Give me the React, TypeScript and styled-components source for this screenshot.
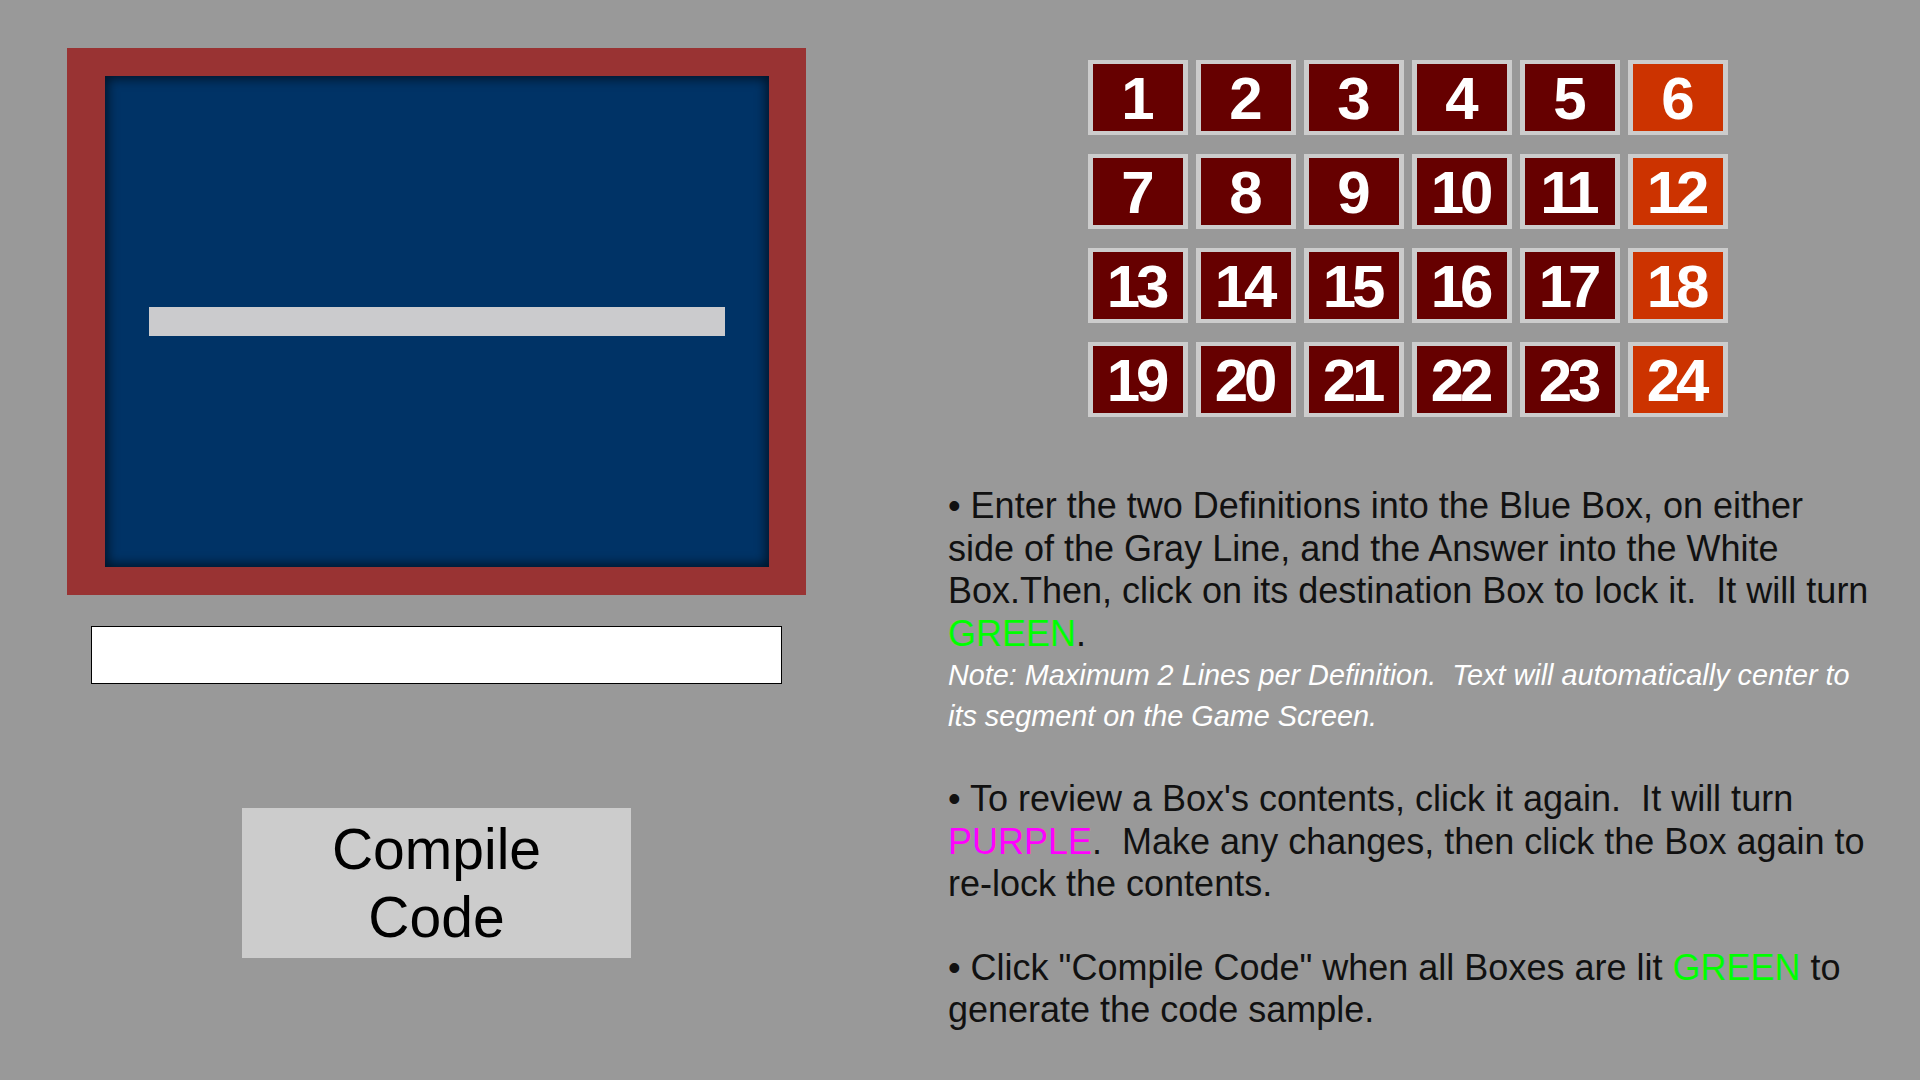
import React from "react";
import styled, { createGlobalStyle } from "styled-components";

const Global = createGlobalStyle`
  html, body {
    margin: 0;
    padding: 0;
    background: #999999;
  }
  body {
    font-family: "Liberation Sans", Arial, sans-serif;
  }
  * { box-sizing: border-box; }
`;

const Page = styled.div`
  width: 1920px;
  height: 1080px;
  background: #999999;
  display: flex;
  align-items: flex-start;
  padding: 48px 0 0 67px;
  gap: 142px;
  overflow: hidden;
`;

const LeftColumn = styled.div`
  width: 739px;
  display: flex;
  flex-direction: column;
  align-items: center;
`;

const Frame = styled.div`
  width: 739px;
  height: 547px;
  background: #993333;
  padding: 28px 37px 28px 38px;
  display: flex;
`;

const Screen = styled.div`
  flex: 1;
  background: #003366;
  box-shadow: inset 0 0 11px 3px rgba(0, 0, 0, 0.6);
  display: flex;
  align-items: center;
  justify-content: center;
`;

const Divider = styled.div`
  width: 576px;
  height: 29px;
  background: #cbcbcd;
`;

const AnswerInput = styled.input`
  margin-top: 31px;
  width: 691px;
  height: 58px;
  background: #ffffff;
  border: 1px solid #000000;
  outline: none;
  padding: 0 8px;
  font-family: "Liberation Sans", Arial, sans-serif;
  font-size: 28px;
`;

const CompileButton = styled.button`
  margin-top: 124px;
  width: 389px;
  height: 150px;
  background: #cccccc;
  border: none;
  padding: 0;
  font-family: "Liberation Sans", Arial, sans-serif;
  font-size: 57px;
  line-height: 68px;
  color: #000000;
  cursor: pointer;
`;

const RightColumn = styled.div`
  padding-top: 12px;
  display: flex;
  flex-direction: column;
`;

const BoxGrid = styled.div`
  margin-left: 140px;
  display: grid;
  grid-template-columns: repeat(6, 100px);
  grid-auto-rows: 75px;
  column-gap: 8px;
  row-gap: 19px;
`;

const NumberBox = styled.div<{ $hot: boolean }>`
  border-style: solid;
  border-color: #cccccc;
  border-width: 4px 5px;
  background: ${(p) => (p.$hot ? "#cc3300" : "#660000")};
  color: #ffffff;
  display: flex;
  align-items: center;
  justify-content: center;
  padding-top: 2px;
  font-family: "Liberation Sans", Arial, sans-serif;
  font-weight: 700;
  font-size: 60px;
  letter-spacing: -4px;
  text-indent: -4px;
  line-height: 1;
  cursor: pointer;
`;

const Instructions = styled.div`
  margin-top: 68px;
  width: 940px;
  font-family: "Liberation Sans", Arial, sans-serif;
  color: #111111;
`;

const Para = styled.p<{ $first?: boolean }>`
  margin: ${(p) => (p.$first ? "0" : "41px 0 0")};
  font-size: 36px;
  line-height: 42.5px;
  white-space: pre-wrap;
`;

const Note = styled.p`
  margin: 0;
  font-size: 28.8px;
  line-height: 41px;
  font-style: italic;
  color: #ffffff;
  white-space: pre-wrap;
`;

const Hue = styled.span<{ $c: string }>`
  color: ${(p) => p.$c};
`;

const GREEN = "#00ff00";
const PURPLE = "#ff00ff";

export default function App() {
  const boxes = Array.from({ length: 24 }, (_, i) => i + 1);
  return (
    <>
      <Global />
      <Page>
        <LeftColumn>
          <Frame>
            <Screen>
              <Divider />
            </Screen>
          </Frame>
          <AnswerInput type="text" />
          <CompileButton>
            Compile
            <br />
            Code
          </CompileButton>
        </LeftColumn>
        <RightColumn>
          <BoxGrid>
            {boxes.map((n) => (
              <NumberBox key={n} $hot={n % 6 === 0}>
                {n}
              </NumberBox>
            ))}
          </BoxGrid>
          <Instructions>
            <Para $first>
              {"• Enter the two Definitions into the Blue Box, on either"}
              <br />
              {"side of the Gray Line, and the Answer into the White"}
              <br />
              {"Box.Then, click on its destination Box to lock it.  It will turn"}
              <br />
              <Hue $c={GREEN}>GREEN</Hue>.
            </Para>
            <Note>
              {"Note: Maximum 2 Lines per Definition.  Text will automatically center to"}
              <br />
              {"its segment on the Game Screen."}
            </Note>
            <Para>
              {"• To review a Box's contents, click it again.  It will turn"}
              <br />
              <Hue $c={PURPLE}>PURPLE</Hue>
              {".  Make any changes, then click the Box again to"}
              <br />
              {"re-lock the contents."}
            </Para>
            <Para>
              {'• Click "Compile Code" when all Boxes are lit '}
              <Hue $c={GREEN}>GREEN</Hue>
              {" to"}
              <br />
              {"generate the code sample."}
            </Para>
          </Instructions>
        </RightColumn>
      </Page>
    </>
  );
}
